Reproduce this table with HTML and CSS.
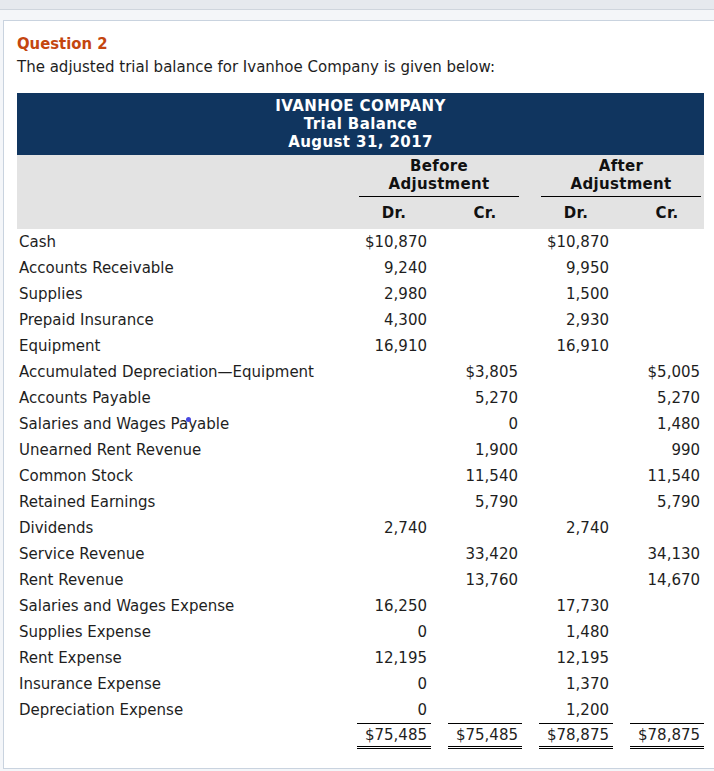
FILE: index.html
```html
<!DOCTYPE html>
<html>
<head>
<meta charset="utf-8">
<link rel="stylesheet" href="styles.css">
</head>
<body>
<div class="topbar"></div>
<div class="card">
  <h2 class="qtitle">Question 2</h2>
  <p class="intro">The adjusted trial balance for Ivanhoe Company is given below:</p>
  <table class="tb">
    <colgroup>
      <col class="c-label">
      <col class="c-val"><col class="c-val"><col class="c-val"><col class="c-val">
    </colgroup>
    <thead>
      <tr class="navy">
        <th colspan="5">IVANHOE COMPANY<br>Trial Balance<br>August 31, 2017</th>
      </tr>
      <tr class="gray group">
        <th></th>
        <th colspan="2"><div class="grp">Before<br>Adjustment</div></th>
        <th colspan="2"><div class="grp">After<br>Adjustment</div></th>
      </tr>
      <tr class="gray drcr">
        <th></th>
        <th>Dr.</th><th>Cr.</th><th>Dr.</th><th>Cr.</th>
      </tr>
    </thead>
    <tbody>
      <tr><td>Cash</td><td>$10,870</td><td></td><td>$10,870</td><td></td></tr>
      <tr><td>Accounts Receivable</td><td>9,240</td><td></td><td>9,950</td><td></td></tr>
      <tr><td>Supplies</td><td>2,980</td><td></td><td>1,500</td><td></td></tr>
      <tr><td>Prepaid Insurance</td><td>4,300</td><td></td><td>2,930</td><td></td></tr>
      <tr><td>Equipment</td><td>16,910</td><td></td><td>16,910</td><td></td></tr>
      <tr><td>Accumulated Depreciation—Equipment</td><td></td><td>$3,805</td><td></td><td>$5,005</td></tr>
      <tr><td>Accounts Payable</td><td></td><td>5,270</td><td></td><td>5,270</td></tr>
      <tr><td>Salaries and Wages Payable</td><td></td><td>0</td><td></td><td>1,480</td></tr>
      <tr><td>Unearned Rent Revenue</td><td></td><td>1,900</td><td></td><td>990</td></tr>
      <tr><td>Common Stock</td><td></td><td>11,540</td><td></td><td>11,540</td></tr>
      <tr><td>Retained Earnings</td><td></td><td>5,790</td><td></td><td>5,790</td></tr>
      <tr><td>Dividends</td><td>2,740</td><td></td><td>2,740</td><td></td></tr>
      <tr><td>Service Revenue</td><td></td><td>33,420</td><td></td><td>34,130</td></tr>
      <tr><td>Rent Revenue</td><td></td><td>13,760</td><td></td><td>14,670</td></tr>
      <tr><td>Salaries and Wages Expense</td><td>16,250</td><td></td><td>17,730</td><td></td></tr>
      <tr><td>Supplies Expense</td><td>0</td><td></td><td>1,480</td><td></td></tr>
      <tr><td>Rent Expense</td><td>12,195</td><td></td><td>12,195</td><td></td></tr>
      <tr><td>Insurance Expense</td><td>0</td><td></td><td>1,370</td><td></td></tr>
      <tr><td>Depreciation Expense</td><td>0</td><td></td><td>1,200</td><td></td></tr>
      <tr class="total">
        <td></td>
        <td><div class="tot">$75,485</div></td>
        <td><div class="tot">$75,485</div></td>
        <td><div class="tot">$78,875</div></td>
        <td><div class="tot">$78,875</div></td>
      </tr>
    </tbody>
  </table>
</div>
<span class="cursor-dot"></span>
</body>
</html>
```

FILE: styles.css
```css
html, body {
  margin: 0;
  padding: 0;
}
body {
  background: #f4f6f9;
  font-family: "DejaVu Sans", Verdana, sans-serif;
  font-size: 15px;
  color: #1e1e1e;
  overflow: hidden;
  height: 771px;
}
.topbar {
  height: 9px;
  background: #e6e9ee;
  border-bottom: 1px solid #cfd5dd;
}
.card {
  margin: 10px -20px 0 3px;
  background: #fff;
  border: 1px solid #c9d3df;
  padding: 13px 10px 19px 13px;
}
.qtitle {
  margin: 0;
  font-family: "DejaVu Sans Condensed", "DejaVu Sans", sans-serif;
  font-weight: bold;
  font-size: 16.5px;
  line-height: 20px;
  color: #c4460f;
}
.intro {
  margin: 4px 0 0 0;
  line-height: 18px;
}
.tb {
  margin-top: 17px;
  width: 687px;
  border-collapse: collapse;
  border-spacing: 0;
  table-layout: fixed;
}
.c-label { width: 323px; }
.c-val { width: 91px; }
.tb th, .tb td {
  padding: 0;
}
.navy th {
  background: #10355f;
  color: #fff;
  font-weight: bold;
  text-align: center;
  line-height: 18px;
  letter-spacing: 0.4px;
  padding: 4px 0;
}
.gray th {
  background: #e3e3e3;
  font-weight: bold;
  color: #111;
  letter-spacing: 0.3px;
}
.group th {
  padding-top: 2px;
  vertical-align: top;
}
.grp {
  margin: 0 3px 0 19px;
  line-height: 18px;
  padding-bottom: 3px;
  border-bottom: 1px solid #000;
  text-align: center;
}
.drcr th {
  height: 32px;
  padding-left: 17px;
  text-align: center;
  line-height: 32px;
}
.tb tbody td {
  height: 26px;
  line-height: 26px;
  text-align: right;
  padding: 0 4px 0 17px;
  white-space: nowrap;
}
.tb tbody td:first-child {
  text-align: left;
  padding-left: 2px;
}
.total td {
  vertical-align: top;
}
.tb tbody .total td {
  padding-right: 0;
  height: auto;
  line-height: 22px;
}
.tot {
  border-top: 1px solid #000;
  border-bottom: 3px double #000;
  padding-right: 4px;
  text-align: right;
}
.cursor-dot {
  position: absolute;
  left: 186px;
  top: 417px;
  width: 5px;
  height: 5px;
  border-radius: 50%;
  background: #4848e0;
}
```
